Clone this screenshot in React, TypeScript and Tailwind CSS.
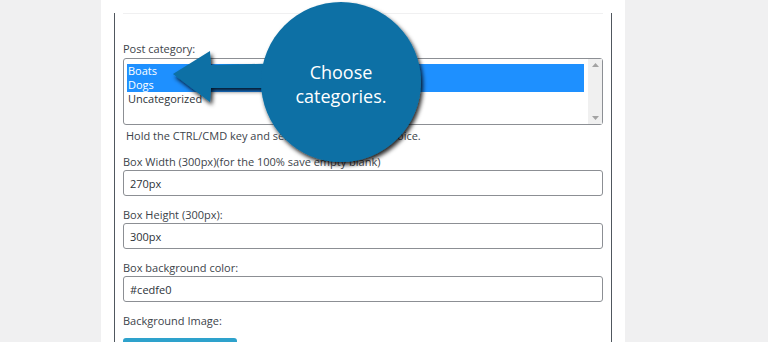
import React from "react";

const font = { fontFamily: '"Open Sans", "Noto Sans", sans-serif' };

function TextField({ label, value }: { label: string; value: string }) {
  return (
    <div className="mt-[11px]">
      <label className="block text-[11px] leading-[15px] text-[#3c434a]">{label}</label>
      <input
        readOnly
        value={value}
        className="mt-[1px] block h-[26px] w-full rounded-[3px] border border-[#8c8f94] bg-white px-[6px] text-[11px] text-[#2c3338] outline-none"
      />
    </div>
  );
}

export default function App() {
  return (
    <div className="relative flex h-[342px] w-[768px] overflow-hidden bg-[#f0f0f1]" style={font}>
      <div className="w-[101px] shrink-0" />
      <div className="w-[524px] shrink-0 bg-white px-[13px]">
        <div className="h-full border-x border-[#50575e] px-[8px]">
          <div className="mt-[13px] h-px bg-[#f0f0f1]" />

          <div className="mt-[27px]">
            <label className="block text-[11px] leading-[15px] text-[#3c434a]">Post category:</label>
            <div className="mt-[2px] flex h-[67px] rounded-[3px] border border-[#8c8f94] bg-white">
              <div className="flex-1 pl-[3px] pt-[5px] pr-[4px] text-[11px] leading-[14px] text-[#2c3338]">
                <div className="bg-[#1e90ff] px-[1px] text-white">Boats</div>
                <div className="bg-[#1e90ff] px-[1px] text-white">Dogs</div>
                <div className="px-[1px]">Uncategorized</div>
              </div>
              <div className="flex w-[14px] flex-col items-center justify-between bg-[#f0f0f0] py-[4px] text-[#a3a3a3]">
                <svg width="7" height="4" viewBox="0 0 7 4"><path d="M0 4 L3.5 0 L7 4 Z" fill="currentColor" /></svg>
                <svg width="7" height="4" viewBox="0 0 7 4"><path d="M0 0 L3.5 4 L7 0 Z" fill="currentColor" /></svg>
              </div>
            </div>
            <p className="mt-[3px] pl-[3px] text-[11px] leading-[15px] text-[#3c434a]">
              Hold the CTRL/CMD key and select the category of choice.
            </p>
          </div>

          <TextField label="Box Width (300px)(for the 100% save empty blank)" value="270px" />
          <TextField label="Box Height (300px):" value="300px" />
          <TextField label="Box background color:" value="#cedfe0" />

          <div className="mt-[11px]">
            <label className="block text-[11px] leading-[15px] text-[#3c434a]">Background Image:</label>
            <button className="mt-[10px] h-[28px] w-[114px] rounded-[3px] bg-[#2ea2cc]" />
          </div>
        </div>
      </div>
      <div className="flex-1" />

      {/* callout overlay */}
      <svg className="absolute left-0 top-0" width="768" height="342" viewBox="0 0 768 342">
        <defs>
          <filter id="sh" x="-30%" y="-30%" width="160%" height="160%">
            <feDropShadow dx="2" dy="3" stdDeviation="2" floodColor="#000" floodOpacity="0.85" />
          </filter>
        </defs>
        <g filter="url(#sh)" fill="#0a6fa5">
          <path d="M173 74 L210 51 L211 65 L295 63 L295 88 L211 88 L210 102 Z" />
          <circle cx="341" cy="82" r="80" />
        </g>
        <text x="341" y="79" textAnchor="middle" fill="#fff" fontSize="18" style={font}>Choose</text>
        <text x="341" y="103" textAnchor="middle" fill="#fff" fontSize="18" style={font}>categories.</text>
      </svg>
    </div>
  );
}
